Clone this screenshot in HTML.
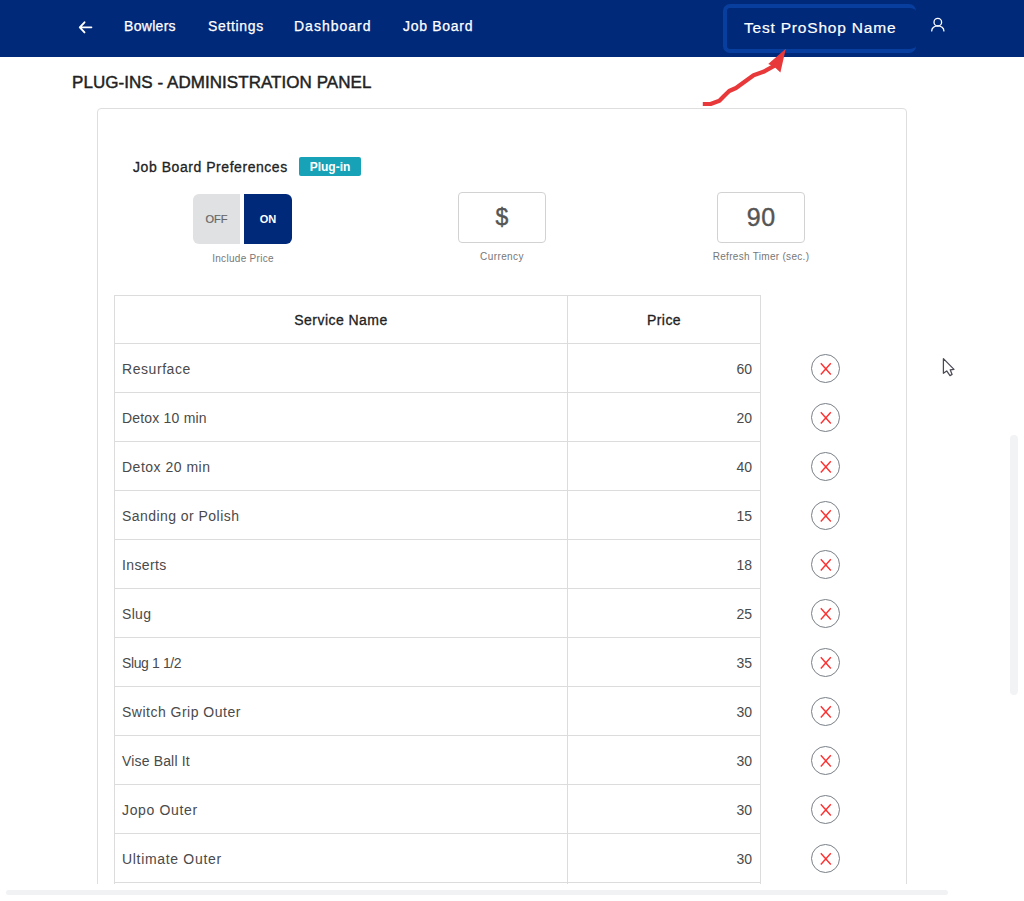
<!DOCTYPE html>
<html>
<head>
<meta charset="utf-8">
<style>
html,body{margin:0;padding:0;background:#fff;}
body{width:1024px;height:901px;position:relative;overflow:hidden;font-family:"Liberation Sans",sans-serif;}
.a{position:absolute;white-space:nowrap;}
#nav{position:absolute;left:0;top:0;width:1024px;height:57px;background:#00297a;}
.nl{position:absolute;top:19px;font-size:14px;line-height:14px;color:#fff;letter-spacing:0.3px;-webkit-text-stroke:0.25px #fff;}
#storewrap{position:absolute;left:723px;top:4px;width:193px;height:49px;}
#store{position:absolute;left:0;top:0;width:189px;height:41px;border:4px solid #083f9f;border-right:0;border-radius:7px;}
#storetxt{position:absolute;left:744px;top:20px;font-size:15.5px;line-height:16px;color:#fff;letter-spacing:0.8px;-webkit-text-stroke:0.2px #fff;}
#title{left:72px;top:74px;font-size:17px;line-height:17px;color:#222;letter-spacing:0.05px;-webkit-text-stroke:0.45px #222;}
#card{position:absolute;left:97px;top:108px;width:808px;height:900px;border:1px solid #dedede;border-radius:4px;}
#jbp{left:133px;top:160px;font-size:14px;line-height:14px;color:#222;letter-spacing:0.55px;-webkit-text-stroke:0.3px #222;}
#badge{position:absolute;left:299px;top:157px;width:62px;height:19px;background:#17a2b8;border-radius:2px;color:#fff;font-weight:bold;font-size:12px;line-height:21px;text-align:center;}
#off{position:absolute;left:193px;top:194px;width:47px;height:50px;background:#e0e1e3;border-radius:6px 0 0 6px;color:#666;font-size:11px;line-height:50px;text-align:center;-webkit-text-stroke:0.2px #666;}
#on{position:absolute;left:244px;top:194px;width:48px;height:50px;background:#00297a;border-radius:0 6px 6px 0;color:#fff;font-weight:bold;font-size:11px;line-height:50px;text-align:center;}
.lbl{position:absolute;font-size:10px;line-height:10px;color:#777;text-align:center;width:140px;}
.inp{position:absolute;top:192px;width:86px;height:49px;border:1px solid #d2d2d2;border-radius:4px;text-align:center;color:#555;-webkit-text-stroke:0.4px #555;}
#tbl{position:absolute;left:114px;top:295px;border-collapse:collapse;}
#tbl td{border:1px solid #dcdcdc;height:48px;padding:0;font-size:14px;color:#4a4a4a;}
#tbl td.n{width:445px;padding-left:7px;letter-spacing:0.65px;}
#tbl td.p{width:184px;padding-right:8px;text-align:right;}
#tbl tr.r td{padding-top:2px;height:46px;}
#tbl tr.h td{height:47px;color:#222;text-align:center;padding:0;-webkit-text-stroke:0.3px #222;letter-spacing:0.45px;}
.x{position:absolute;left:811px;width:27px;height:27px;border:1.5px solid #7a8087;border-radius:50%;}
.x svg{position:absolute;left:0;top:0;}
</style>
</head>
<body>
<div id="nav">
  <svg class="a" style="left:76px;top:19px" width="18" height="17" viewBox="76 19 18 17"><path d="M91.4 27.35H80M84.5 22.3L79.8 27.35L84.5 32.4" fill="none" stroke="#fff" stroke-width="1.9" stroke-linecap="round" stroke-linejoin="round"/></svg>
  <div class="nl" style="left:124px">Bowlers</div>
  <div class="nl" style="left:208px;letter-spacing:0.65px">Settings</div>
  <div class="nl" style="left:294px;letter-spacing:1px">Dashboard</div>
  <div class="nl" style="left:403px;letter-spacing:0.7px">Job Board</div>
  <div id="storewrap"><div id="store"></div></div>
  <div id="storetxt" class="a">Test ProShop Name</div>
  <svg class="a" style="left:929px;top:15px" width="18" height="19" viewBox="929 15 18 19"><circle cx="937.8" cy="22.2" r="3.8" fill="none" stroke="#fff" stroke-width="1.3"/><path d="M931.7 30.9A6.1 5 0 0 1 943.9 30.9" fill="none" stroke="#fff" stroke-width="1.3" stroke-linecap="round"/></svg>
</div>
<svg class="a" style="left:0;top:0" width="1024" height="120"><path d="M702.8 104L710.6 104L719.4 100.8L724.3 95.7L729.2 91L736 88L753.6 75.2L763.4 71.8L775 65.4" fill="none" stroke="#e8383a" stroke-width="4.2" stroke-linejoin="round"/><path d="M785.8 48.8L768.2 63.9L774 66.5L780.4 72.4Z" fill="#e8383a"/></svg>

<div id="title" class="a">PLUG-INS - ADMINISTRATION PANEL</div>
<div id="jbp" class="a">Job Board Preferences</div>
<div id="badge">Plug-in</div>
<div id="off">OFF</div>
<div id="on">ON</div>
<div class="lbl" style="left:173px;top:254px;letter-spacing:0.3px">Include Price</div>
<div class="inp" style="left:458px;font-size:23px;line-height:49px;">$</div>
<div class="lbl" style="left:432px;top:252px;letter-spacing:0.4px">Currency</div>
<div class="inp" style="left:717px;font-size:25px;line-height:49px;letter-spacing:0.6px;text-indent:0.6px;">90</div>
<div class="lbl" style="left:691px;top:252px;letter-spacing:0.3px">Refresh Timer (sec.)</div>

<div style="position:absolute;left:0;top:0;width:1024px;height:884px;overflow:hidden;">
<div id="card"></div>
<table id="tbl">
<tr class="h"><td class="n" style="padding-left:0;text-align:center;height:47px">Service Name</td><td class="p" style="padding-right:0;text-align:center">Price</td></tr>
<tr class="r"><td class="n" style="letter-spacing:0.56px">Resurface</td><td class="p">60</td></tr>
<tr class="r"><td class="n" style="letter-spacing:0.19px">Detox 10 min</td><td class="p">20</td></tr>
<tr class="r"><td class="n" style="letter-spacing:0.5px">Detox 20 min</td><td class="p">40</td></tr>
<tr class="r"><td class="n" style="letter-spacing:0.45px">Sanding or Polish</td><td class="p">15</td></tr>
<tr class="r"><td class="n" style="letter-spacing:0.38px">Inserts</td><td class="p">18</td></tr>
<tr class="r"><td class="n" style="letter-spacing:0.33px">Slug</td><td class="p">25</td></tr>
<tr class="r"><td class="n" style="letter-spacing:-0.38px">Slug 1 1/2</td><td class="p">35</td></tr>
<tr class="r"><td class="n" style="letter-spacing:0.49px">Switch Grip Outer</td><td class="p">30</td></tr>
<tr class="r"><td class="n" style="letter-spacing:0.16px">Vise Ball It</td><td class="p">30</td></tr>
<tr class="r"><td class="n" style="letter-spacing:0.65px">Jopo Outer</td><td class="p">30</td></tr>
<tr class="r"><td class="n" style="letter-spacing:0.68px">Ultimate Outer</td><td class="p">30</td></tr>
<tr class="r"><td class="n">Extra</td><td class="p">30</td></tr>
</table>
<div class="x" style="top:354px"><svg width="27" height="27" viewBox="0 0 27 27"><path d="M8.8 8.2L18.8 19.5M18.8 8.2L8.8 19.5" stroke="#ff3030" stroke-width="1.4" fill="none"/></svg></div>
<div class="x" style="top:403px"><svg width="27" height="27" viewBox="0 0 27 27"><path d="M8.8 8.2L18.8 19.5M18.8 8.2L8.8 19.5" stroke="#ff3030" stroke-width="1.4" fill="none"/></svg></div>
<div class="x" style="top:452px"><svg width="27" height="27" viewBox="0 0 27 27"><path d="M8.8 8.2L18.8 19.5M18.8 8.2L8.8 19.5" stroke="#ff3030" stroke-width="1.4" fill="none"/></svg></div>
<div class="x" style="top:501px"><svg width="27" height="27" viewBox="0 0 27 27"><path d="M8.8 8.2L18.8 19.5M18.8 8.2L8.8 19.5" stroke="#ff3030" stroke-width="1.4" fill="none"/></svg></div>
<div class="x" style="top:550px"><svg width="27" height="27" viewBox="0 0 27 27"><path d="M8.8 8.2L18.8 19.5M18.8 8.2L8.8 19.5" stroke="#ff3030" stroke-width="1.4" fill="none"/></svg></div>
<div class="x" style="top:599px"><svg width="27" height="27" viewBox="0 0 27 27"><path d="M8.8 8.2L18.8 19.5M18.8 8.2L8.8 19.5" stroke="#ff3030" stroke-width="1.4" fill="none"/></svg></div>
<div class="x" style="top:648px"><svg width="27" height="27" viewBox="0 0 27 27"><path d="M8.8 8.2L18.8 19.5M18.8 8.2L8.8 19.5" stroke="#ff3030" stroke-width="1.4" fill="none"/></svg></div>
<div class="x" style="top:697px"><svg width="27" height="27" viewBox="0 0 27 27"><path d="M8.8 8.2L18.8 19.5M18.8 8.2L8.8 19.5" stroke="#ff3030" stroke-width="1.4" fill="none"/></svg></div>
<div class="x" style="top:746px"><svg width="27" height="27" viewBox="0 0 27 27"><path d="M8.8 8.2L18.8 19.5M18.8 8.2L8.8 19.5" stroke="#ff3030" stroke-width="1.4" fill="none"/></svg></div>
<div class="x" style="top:795px"><svg width="27" height="27" viewBox="0 0 27 27"><path d="M8.8 8.2L18.8 19.5M18.8 8.2L8.8 19.5" stroke="#ff3030" stroke-width="1.4" fill="none"/></svg></div>
<div class="x" style="top:844px"><svg width="27" height="27" viewBox="0 0 27 27"><path d="M8.8 8.2L18.8 19.5M18.8 8.2L8.8 19.5" stroke="#ff3030" stroke-width="1.4" fill="none"/></svg></div>
</div>

<div style="position:absolute;left:6px;top:890px;width:942px;height:5px;background:#f1f2f4;border-radius:3px;"></div>
<div style="position:absolute;left:1010px;top:435px;width:8px;height:260px;background:#f2f3f5;border-radius:4px;"></div>
<svg class="a" style="left:935px;top:350px" width="30" height="35" viewBox="935 350 30 35"><path d="M943.4 358.6L943.4 373.3L946.7 370.9L950 375.6L952.1 374.4L950.2 369.8L954 369.4Z" fill="#fff" stroke="#4a4a55" stroke-width="1.25" stroke-linejoin="round"/></svg>
</body>
</html>
